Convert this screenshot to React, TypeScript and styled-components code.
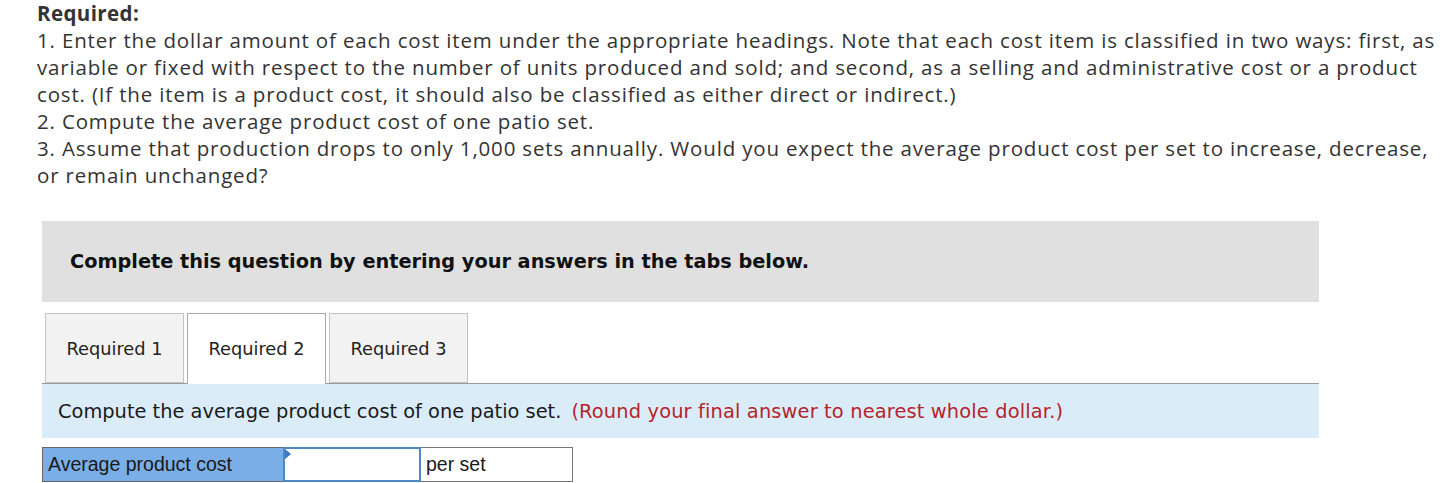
import React from "react";
import styled, { createGlobalStyle } from "styled-components";

const Global = createGlobalStyle`
  html, body { margin: 0; padding: 0; background: #fff; }
  body { width: 1452px; height: 483px; overflow: hidden; }
`;

const Page = styled.div`
  display: flex;
  flex-direction: column;
`;

const Instructions = styled.div`
  margin-left: 37px;
  width: 1402px;
  font-family: "Open Sans", "Lato", sans-serif;
  font-size: 20.5px;
  line-height: 27px;
  letter-spacing: 0.83px;
  color: #333;
`;

const Heading = styled.div`
  font-weight: 700;
  letter-spacing: 0.4px;
`;

const Line = styled.div``;

const Question = styled.div`
  margin-top: 32px;
  margin-left: 42px;
  width: 1277px;
  display: flex;
  flex-direction: column;
`;

const Banner = styled.div`
  background: #e0e0e0;
  height: 81px;
  display: flex;
  align-items: center;
  padding-left: 28px;
  font-family: "DejaVu Sans", Verdana, sans-serif;
  font-weight: 700;
  font-size: 19.3px;
  color: #111;
`;

const TabStrip = styled.div`
  margin-top: 11px;
  display: flex;
  gap: 3px;
  padding-left: 3px;
  border-bottom: 1px solid #999;
  height: 70px;
`;

const Tab = styled.div<{ $active?: boolean }>`
  width: 139px;
  box-sizing: border-box;
  height: ${(p) => (p.$active ? "71px" : "70px")};
  margin-bottom: ${(p) => (p.$active ? "-1px" : "0")};
  padding-bottom: ${(p) => (p.$active ? "1px" : "0")};
  background: ${(p) => (p.$active ? "#fff" : "#f2f2f2")};
  border: 1px solid ${(p) => (p.$active ? "#aaa" : "#c4c4c4")};
  border-bottom: ${(p) => (p.$active ? "none" : "1px solid #c4c4c4")};
  display: flex;
  align-items: center;
  justify-content: center;
  font-family: "DejaVu Sans", Verdana, sans-serif;
  font-size: 17.8px;
  color: #222;
`;

const Info = styled.div`
  background: #dbecf9;
  height: 54px;
  display: flex;
  align-items: center;
  padding-left: 16px;
  font-family: "DejaVu Sans", Verdana, sans-serif;
  font-size: 19.4px;
  color: #1a1a1a;
  gap: 10px;
`;

const Hint = styled.span`
  color: #b5242a;
  letter-spacing: 0.15px;
`;

const AnswerRow = styled.div`
  margin-top: 9px;
  display: flex;
  height: 35px;
  font-family: "Liberation Sans", Arial, sans-serif;
  font-size: 19.5px;
`;

const LabelCell = styled.div`
  width: 241px;
  box-sizing: border-box;
  background: #7aaee6;
  border: 1px solid #666;
  border-right: none;
  display: flex;
  align-items: center;
  padding-left: 5px;
  color: #1a1a1a;
`;

const InputCell = styled.div`
  position: relative;
  width: 138px;
  box-sizing: border-box;
  border: 2px solid #4f86c6;
  background: #fff;
`;

const Marker = styled.div`
  position: absolute;
  left: 0;
  top: 0;
  width: 0;
  height: 0;
  border-top: 5px solid transparent;
  border-bottom: 5px solid transparent;
  border-left: 6px solid #3a78c2;
`;

const UnitCell = styled.div`
  width: 152px;
  box-sizing: border-box;
  border: 1px solid #777;
  border-left: none;
  display: flex;
  align-items: center;
  padding-left: 5px;
  color: #1a1a1a;
  background: #fff;
`;

export default function App() {
  return (
    <Page>
      <Global />
      <Instructions>
        <Heading>Required:</Heading>
        <Line>
          1. Enter the dollar amount of each cost item under the appropriate headings. Note that each cost item is classified in two ways: first, as variable or fixed with respect to the number of units produced and sold; and second, as a selling and administrative cost or a product cost. (If the item is a product cost, it should also be classified as either direct or indirect.)
        </Line>
        <Line>2. Compute the average product cost of one patio set.</Line>
        <Line>
          3. Assume that production drops to only 1,000 sets annually. Would you expect the average product cost per set to increase, decrease, or remain unchanged?
        </Line>
      </Instructions>
      <Question>
        <Banner>Complete this question by entering your answers in the tabs below.</Banner>
        <TabStrip>
          <Tab>Required 1</Tab>
          <Tab $active>Required 2</Tab>
          <Tab>Required 3</Tab>
        </TabStrip>
        <Info>
          <span>Compute the average product cost of one patio set.</span>
          <Hint>(Round your final answer to nearest whole dollar.)</Hint>
        </Info>
        <AnswerRow>
          <LabelCell>Average product cost</LabelCell>
          <InputCell>
            <Marker />
          </InputCell>
          <UnitCell>per set</UnitCell>
        </AnswerRow>
      </Question>
    </Page>
  );
}
